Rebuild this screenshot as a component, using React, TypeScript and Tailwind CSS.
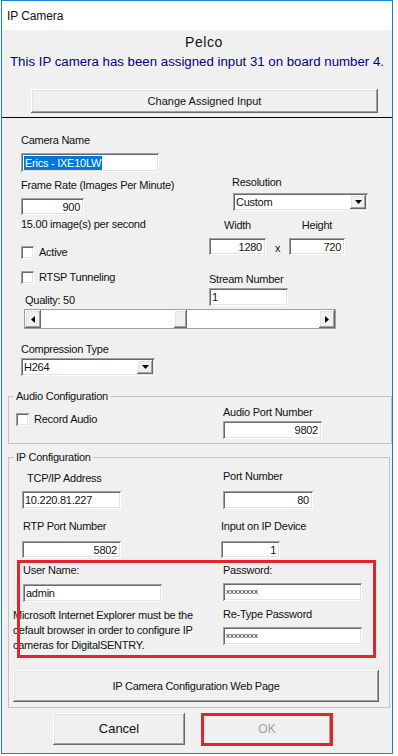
import type { ReactNode } from 'react'

// Classic Win32 bevels
const raised =
  'bg-[#f0f0f0] shadow-[inset_-1px_-1px_0_#696969,inset_1px_1px_0_#ffffff,inset_-2px_-2px_0_#a0a0a0,inset_2px_2px_0_#e3e3e3]'
const sunken =
  'bg-white shadow-[inset_1px_1px_0_#a0a0a0,inset_-1px_-1px_0_#ffffff,inset_2px_2px_0_#696969,inset_-2px_-2px_0_#e3e3e3]'

function Label({ children, className = '' }: { children: ReactNode; className?: string }) {
  return <div className={`h-[14px] leading-[14px] whitespace-nowrap ${className}`}>{children}</div>
}

function Field({
  children,
  className = '',
  right = false,
}: {
  children?: ReactNode
  className?: string
  right?: boolean
}) {
  return (
    <div
      className={`${sunken} flex items-center whitespace-nowrap leading-[14px] ${
        right ? 'justify-end pr-[4px]' : 'pl-[3px]'
      } ${className}`}
    >
      {children}
    </div>
  )
}

function Check({ label, className = '' }: { label: string; className?: string }) {
  return (
    <div className={`flex items-center h-[14px] ${className}`}>
      <span className={`${sunken} w-[13px] h-[13px] shrink-0`} />
      <span className="ml-[5px] leading-[14px]">{label}</span>
    </div>
  )
}

function Combo({ value, className = '' }: { value: string; className?: string }) {
  return (
    <div className={`${sunken} flex items-center pl-[3px] pr-[2px] ${className}`}>
      <span className="flex-1 leading-[14px]">{value}</span>
      <span className={`${raised} w-[16px] h-[14px] flex items-center justify-center`}>
        <svg width="7" height="4" viewBox="0 0 7 4">
          <path d="M0 0h7L3.5 4z" fill="#000" />
        </svg>
      </span>
    </div>
  )
}

function Button({ children, className = '' }: { children: ReactNode; className?: string }) {
  return (
    <div className={`${raised} flex items-center justify-center whitespace-nowrap ${className}`}>
      {children}
    </div>
  )
}

export default function App() {
  return (
    <div className="w-[398px] h-[756px] bg-white pl-[1px] font-['Liberation_Sans',Arial,sans-serif] text-[11px] tracking-[-0.25px] text-[#111]">
      <div className="w-[392px] h-[754px] border border-[#1883d7] flex flex-col">
        {/* Title bar */}
        <div className="h-[29px] shrink-0 bg-white flex items-center pl-[5px] pt-[1px] text-[12px] tracking-[-0.1px]">
          IP Camera
        </div>

        <div className="flex-1 bg-[#f0f0f0] flex flex-col">
          <div className="mt-[4px] h-[16px] leading-[16px] text-[14px] tracking-[0.6px] flex justify-center pl-[14px]">
            Pelco
          </div>
          <div className="mt-[4px] h-[16px] leading-[16px] text-[13.25px] tracking-normal text-[#000080] text-center whitespace-nowrap">
            This IP camera has been assigned input 31 on board number 4.
          </div>
          <Button className="mt-[19px] ml-[29px] w-[347px] h-[24px] tracking-normal">
            Change Assigned Input
          </Button>
          <div className="mt-[4px] h-px bg-black" />

          {/* Camera settings */}
          <div className="flex pl-[19px] h-[189px]">
            <div className="w-[188px] flex flex-col">
              <Label className="mt-[15px]">Camera Name</Label>
              <Field className="mt-[6px] w-[138px] h-[19px] pl-[2px]">
                <span className="bg-[#0078d7] text-white px-[1px]">Erics - IXE10LW</span>
              </Field>
              <Label className="mt-[6px]">Frame Rate (Images Per Minute)</Label>
              <Field right className="mt-[6px] w-[63px] h-[17px]">
                900
              </Field>
              <Label className="mt-[2px]">15.00 image(s) per second</Label>
              <Check label="Active" className="mt-[14px]" />
              <Check label="RTSP Tunneling" className="mt-[11px]" />
              <Label className="mt-[9px] ml-[4px]">Quality: 50</Label>
            </div>
            <div className="flex flex-col">
              <Label className="mt-[57px] ml-[23px]">Resolution</Label>
              <Combo value="Custom" className="mt-[4px] ml-[24px] w-[135px] h-[18px]" />
              <div className="mt-[7px] flex">
                <Label className="w-[57px] text-center">Width</Label>
                <Label className="ml-[23px] w-[56px] text-center">Height</Label>
              </div>
              <div className="mt-[5px] flex items-center">
                <Field right className="w-[57px] h-[17px]">
                  1280
                </Field>
                <span className="w-[23px] text-center pt-[3px]">x</span>
                <Field right className="w-[56px] h-[17px]">
                  720
                </Field>
              </div>
              <Label className="mt-[15px]">Stream Number</Label>
              <Field className="mt-[2px] w-[79px] h-[18px]">1</Field>
            </div>
          </div>

          {/* Quality scrollbar */}
          <div className="mt-[2px] ml-[22px] w-[312px] h-[20px] flex border border-[#a0a0a0] bg-white">
            <div className={`${raised} w-[16px] h-full flex items-center justify-center`}>
              <svg width="4" height="7" viewBox="0 0 4 7">
                <path d="M4 0v7L0 3.5z" fill="#000" />
              </svg>
            </div>
            <div className="flex-1 flex">
              <div className={`${raised} ml-[133px] w-[13px] h-full`} />
            </div>
            <div className={`${raised} w-[16px] h-full flex items-center justify-center`}>
              <svg width="4" height="7" viewBox="0 0 4 7">
                <path d="M0 0v7L4 3.5z" fill="#000" />
              </svg>
            </div>
          </div>

          <Label className="mt-[13px] ml-[19px]">Compression Type</Label>
          <Combo value="H264" className="mt-[2px] ml-[19px] w-[134px] h-[18px]" />

          {/* Audio Configuration */}
          <fieldset className="mt-[13px] ml-[6px] w-[384px] h-[55px] border border-[#c4c4c4] flex">
            <legend className="ml-[5px] px-[2px] leading-[14px]">Audio Configuration</legend>
            <div className="flex">
              <div className="w-[214px] pl-[7px]">
                <Check label="Record Audio" className="mt-[9px]" />
              </div>
              <div className="flex flex-col">
                <Label className="mt-[2px]">Audio Port Number</Label>
                <Field right className="mt-[2px] w-[99px] h-[18px]">
                  9802
                </Field>
              </div>
            </div>
          </fieldset>

          {/* IP Configuration */}
          <fieldset className="mt-[6px] ml-[6px] w-[382px] h-[258px] border border-[#c4c4c4]">
            <legend className="ml-[5px] px-[2px] leading-[14px]">IP Configuration</legend>

            <div className="flex">
              <div className="w-[212px] flex flex-col">
                <Label className="mt-[7px] ml-[18px]">TCP/IP Address</Label>
                <Field className="mt-[6px] ml-[13px] w-[99px] h-[18px]">10.220.81.227</Field>
                <Label className="mt-[10px] ml-[14px]">RTP Port Number</Label>
                <Field right className="mt-[8px] ml-[13px] w-[99px] h-[17px]">
                  5802
                </Field>
              </div>
              <div className="flex flex-col">
                <Label className="mt-[5px] ml-[2px]">Port Number</Label>
                <Field right className="mt-[8px] ml-[2px] w-[90px] h-[18px]">
                  80
                </Field>
                <Label className="mt-[10px]">Input on IP Device</Label>
                <Field right className="mt-[8px] w-[59px] h-[17px]">
                  1
                </Field>
              </div>
            </div>

            {/* Credentials (annotated in red) */}
            <div className="relative flex">
              <div className="w-[212px] flex flex-col">
                <Label className="mt-[5px] ml-[14px]">User Name:</Label>
                <Field className="mt-[7px] ml-[14px] w-[139px] h-[18px]">admin</Field>
                <div className="mt-[6px] ml-[4px] leading-[15px] whitespace-nowrap">
                  Microsoft Internet Explorer must be the
                  <br />
                  default browser in order to configure IP
                  <br />
                  cameras for DigitalSENTRY.
                </div>
              </div>
              <div className="flex flex-col">
                <Label className="mt-[5px] ml-[2px]">Password:</Label>
                <Field className="mt-[6px] ml-[2px] w-[139px] h-[18px] text-[8px] tracking-normal">
                  xxxxxxxx
                </Field>
                <Label className="mt-[6px] ml-[2px]">Re-Type Password</Label>
                <Field className="mt-[6px] ml-[2px] w-[139px] h-[18px] text-[8px] tracking-normal">
                  xxxxxxxx
                </Field>
              </div>
              <div className="absolute top-[2px] left-[8px] w-[359px] h-[98px] border-[3px] border-[#e3242b] pointer-events-none" />
            </div>

            <Button className="mt-[17px] ml-[4px] w-[366px] h-[32px]">IP Camera Configuration Web Page</Button>
          </fieldset>

          {/* Dialog buttons */}
          <div className="mt-[5px] flex">
            <Button className="ml-[51px] w-[132px] h-[32px] text-[13px] tracking-normal">Cancel</Button>
            <div className="relative ml-[18px]">
              <Button className="w-[128px] h-[32px] text-[12px] tracking-normal text-[#a0a0a0]">OK</Button>
              <div className="absolute -left-[2px] -right-[2px] top-0 -bottom-[1px] border-[3px] border-[#e3242b]" />
            </div>
          </div>
        </div>
      </div>
    </div>
  )
}
